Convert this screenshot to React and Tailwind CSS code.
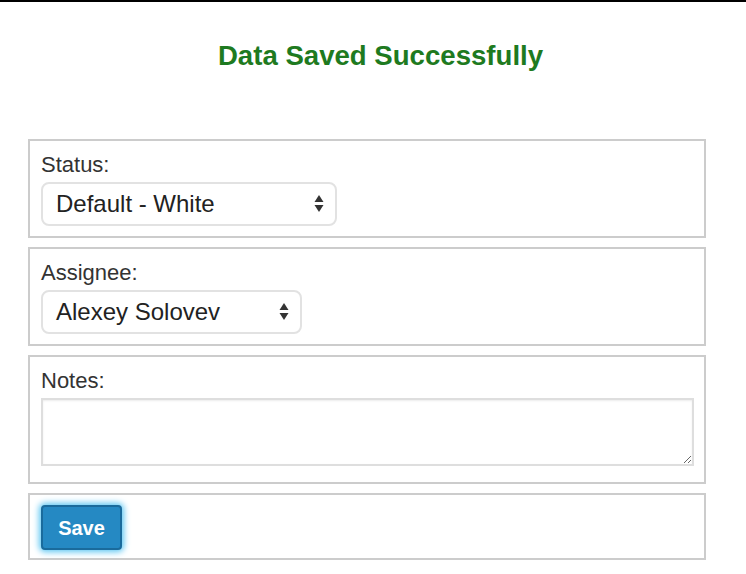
import React from "react";

const font = { fontFamily: '"Liberation Sans", Arial, sans-serif' };

const Arrows = () => (
  <svg width="10" height="20" viewBox="0 0 10 20" className="absolute right-[11px] top-1/2 -translate-y-1/2">
    <path d="M5 1 L9.5 8 L0.5 8 Z" fill="#333" />
    <path d="M0.5 11 L9.5 11 L5 18 Z" fill="#333" />
  </svg>
);

const Select = ({ value, width }) => (
  <div
    className={`relative h-[44px] ${width} rounded-[8px] border-2 border-[#e2e2e2] bg-white flex items-center pl-[13px] text-[24px] text-[#222]`}
  >
    {value}
    <Arrows />
  </div>
);

const Box = ({ children, className }) => (
  <div className={`border-2 border-[#cccccc] px-[11px] ${className}`}>{children}</div>
);

export default function App() {
  return (
    <div className="min-h-[574px] bg-white" style={font}>
      <div className="h-[2px] bg-black" />
      <div className="flex justify-center pl-[15px] mt-[38px]">
        <h1 className="text-[27.6px] leading-[32px] font-bold text-[#1e7a20]">Data Saved Successfully</h1>
      </div>

      <div className="ml-[28px] w-[678px] mt-[67px] flex flex-col gap-[9px]">
        <Box className="pt-[12px] pb-[10px]">
          <label className="block text-[22px] leading-[24px] text-[#333]">Status:</label>
          <div className="mt-[5px]">
            <Select value="Default - White" width="w-[296px]" />
          </div>
        </Box>

        <Box className="pt-[12px] pb-[10px]">
          <label className="block text-[22px] leading-[24px] text-[#333]">Assignee:</label>
          <div className="mt-[5px]">
            <Select value="Alexey Solovev" width="w-[261px]" />
          </div>
        </Box>

        <Box className="pt-[12px] pb-[16px]">
          <label className="block text-[22px] leading-[24px] text-[#333]">Notes:</label>
          <textarea className="mt-[5px] block w-[653px] h-[68px] border-2 border-[#dedede] shadow-[inset_0_1px_2px_rgba(0,0,0,0.08)] outline-none" />
        </Box>

        <Box className="pt-[10px] pb-[8px]">
          <button className="h-[45px] w-[81px] rounded-[4px] border-2 border-[#1a6b9c] bg-[#2589c3] text-white text-[20px] font-bold shadow-[0_0_6px_2px_#5cc6f2]">
            Save
          </button>
        </Box>
      </div>
    </div>
  );
}
